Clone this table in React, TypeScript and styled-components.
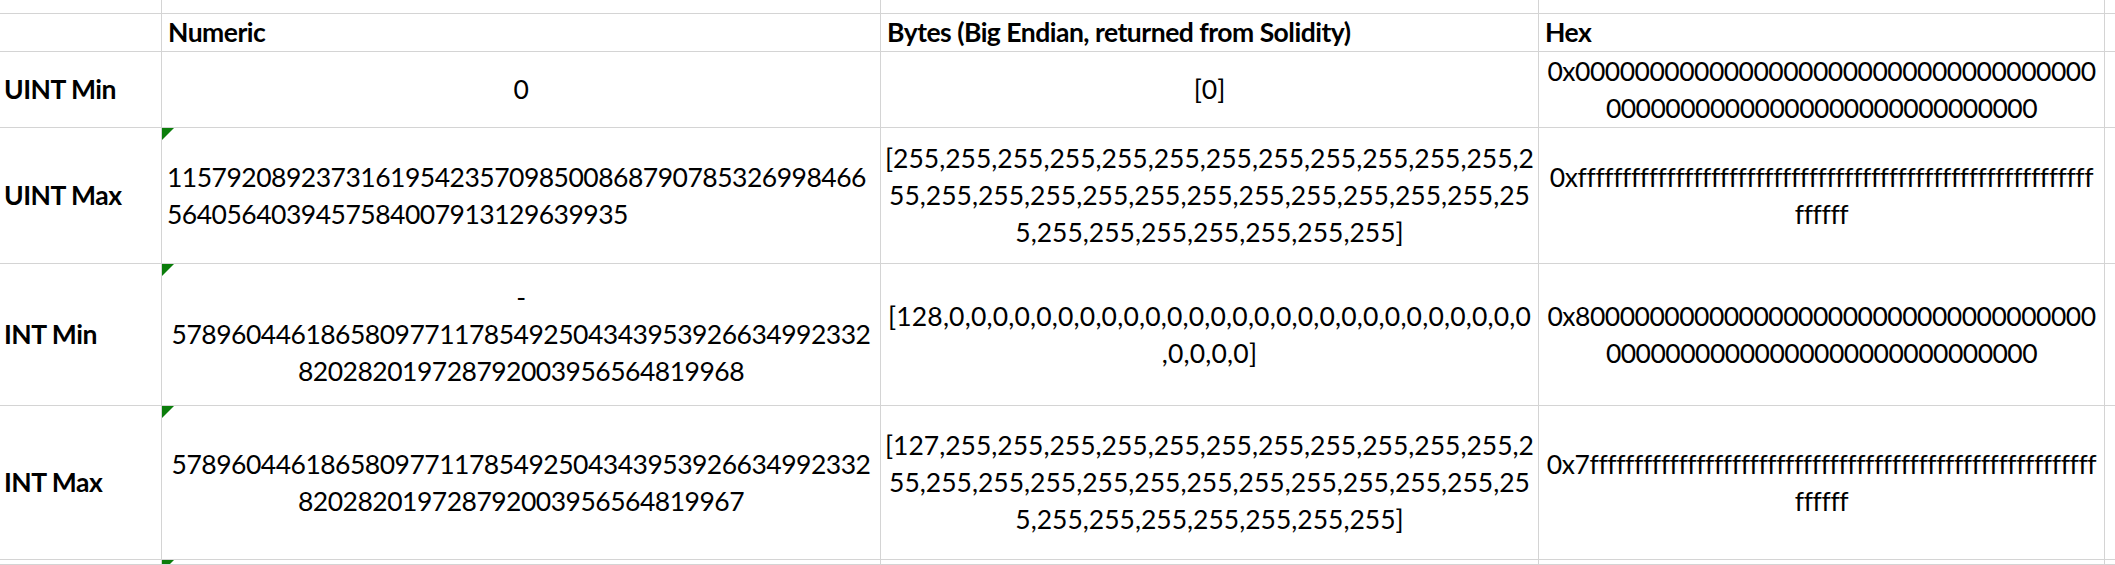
import React from "react";
import styled, { createGlobalStyle } from "styled-components";

const GlobalStyle = createGlobalStyle`
  html, body {
    margin: 0;
    padding: 0;
    background: #ffffff;
    overflow: hidden;
  }
  body {
    font-family: Lato, "Liberation Sans", sans-serif;
    color: #000000;
  }
`;

const GRID = "#d4d4d4";

const Sheet = styled.div`
  display: grid;
  grid-template-columns: 162px 719px 658px 566px 1fr;
  grid-template-rows: 14px 38px 76px 136px 142px 154px 5px;
  width: 2115px;
  height: 565px;
  overflow: hidden;
  font-family: Lato, "Liberation Sans", sans-serif;
  font-size: 26.5px;
  letter-spacing: -0.5px;
  line-height: 37px;
`;

type Align = "left" | "center";

const Cell = styled.div<{ $align?: Align; $bold?: boolean; $spacing?: number }>`
  position: relative;
  box-sizing: border-box;
  border-right: 1px solid ${GRID};
  border-bottom: 1px solid ${GRID};
  display: flex;
  flex-direction: column;
  justify-content: center;
  align-items: ${(p) => (p.$align === "center" ? "center" : "flex-start")};
  padding: 0 5px;
  overflow: hidden;
  font-weight: ${(p) => (p.$bold ? 700 : 400)};
  letter-spacing: ${(p) => (p.$spacing !== undefined ? `${p.$spacing}px` : "inherit")};
`;

const Line = styled.span`
  display: block;
  white-space: pre;
`;

const HeaderCell = styled(Cell)`
  padding-left: 6px;
`;

const LabelCell = styled(Cell)`
  padding-left: 4px;
`;

const ErrorMark = styled.span`
  position: absolute;
  left: 0;
  top: 0;
  width: 0;
  height: 0;
  border-top: 12px solid #0b7d0b;
  border-right: 12px solid transparent;
`;

type Block = { lines: string[]; align: Align; spacing?: number };

type Row = {
  label: string;
  flagged: boolean;
  numeric: Block;
  bytes: Block;
  hex: Block;
};

const rep = (s: string, n: number) => s.repeat(n);

const rows: Row[] = [
  {
    label: "UINT Min",
    flagged: false,
    numeric: { lines: ["0"], align: "center" },
    bytes: { lines: ["[0]"], align: "center", spacing: 0 },
    hex: { lines: ["0x" + rep("0", 35), rep("0", 29)], align: "center" },
  },
  {
    label: "UINT Max",
    flagged: true,
    numeric: {
      lines: [
        "11579208923731619542357098500868790785326998466",
        "5640564039457584007913129639935",
      ],
      align: "left",
    },
    bytes: {
      lines: [
        "[" + rep("255,", 12) + "2",
        "55," + rep("255,", 11) + "25",
        "5," + Array(7).fill("255").join(",") + "]",
      ],
      align: "center",
      spacing: 0,
    },
    hex: { lines: ["0x" + rep("f", 58), rep("f", 6)], align: "center", spacing: -0.4 },
  },
  {
    label: "INT Min",
    flagged: true,
    numeric: {
      lines: [
        "-",
        "57896044618658097711785492504343953926634992332",
        "820282019728792003956564819968",
      ],
      align: "center",
    },
    bytes: {
      lines: ["[128," + rep("0,", 26) + "0", ",0,0,0,0]"],
      align: "center",
      spacing: 0.2,
    },
    hex: { lines: ["0x8" + rep("0", 34), rep("0", 29)], align: "center" },
  },
  {
    label: "INT Max",
    flagged: true,
    numeric: {
      lines: [
        "57896044618658097711785492504343953926634992332",
        "820282019728792003956564819967",
      ],
      align: "center",
    },
    bytes: {
      lines: [
        "[127," + rep("255,", 11) + "2",
        "55," + rep("255,", 11) + "25",
        "5," + Array(7).fill("255").join(",") + "]",
      ],
      align: "center",
      spacing: 0,
    },
    hex: { lines: ["0x7" + rep("f", 57), rep("f", 6)], align: "center", spacing: -0.4 },
  },
];

const headers = ["", "Numeric", "Bytes (Big Endian, returned from Solidity)", "Hex", ""];

const BlockCell: React.FC<{ block: Block; flagged?: boolean }> = ({ block, flagged }) => (
  <Cell $align={block.align} $spacing={block.spacing}>
    {flagged && <ErrorMark />}
    {block.lines.map((l, i) => (
      <Line key={i}>{l}</Line>
    ))}
  </Cell>
);

export default function App() {
  return (
    <>
      <GlobalStyle />
      <Sheet>
        {headers.map((_, i) => (
          <Cell key={`top-${i}`} />
        ))}
        {headers.map((h, i) => (
          <HeaderCell key={`h-${i}`} $bold>
            {h && <Line>{h}</Line>}
          </HeaderCell>
        ))}
        {rows.map((r) => (
          <React.Fragment key={r.label}>
            <LabelCell $bold>
              <Line>{r.label}</Line>
            </LabelCell>
            <BlockCell block={r.numeric} flagged={r.flagged} />
            <BlockCell block={r.bytes} />
            <BlockCell block={r.hex} />
            <Cell />
          </React.Fragment>
        ))}
        <Cell />
        <Cell>
          <ErrorMark />
        </Cell>
        <Cell />
        <Cell />
        <Cell />
      </Sheet>
    </>
  );
}
